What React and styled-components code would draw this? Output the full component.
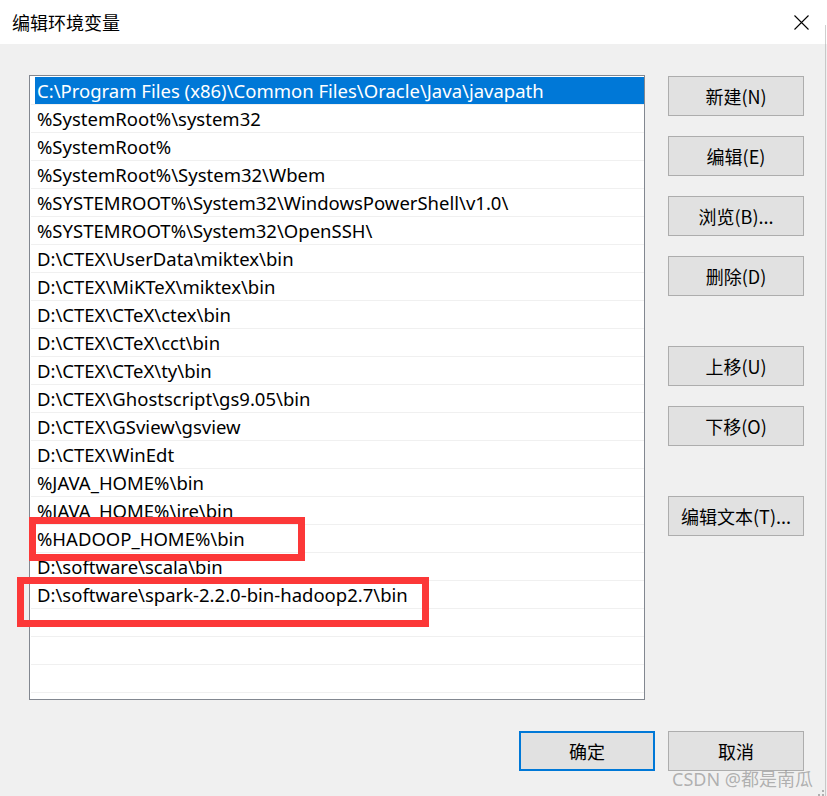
import React from "react";
import styled, { createGlobalStyle } from "styled-components";

const GlobalStyle = createGlobalStyle`
  html, body {
    margin: 0;
    padding: 0;
    background: #f0f0f0;
  }
  body {
    font-family: "Noto Sans", "Noto Sans CJK SC", sans-serif;
    color: #000;
  }
`;

const paths = [
  "C:\\Program Files (x86)\\Common Files\\Oracle\\Java\\javapath",
  "%SystemRoot%\\system32",
  "%SystemRoot%",
  "%SystemRoot%\\System32\\Wbem",
  "%SYSTEMROOT%\\System32\\WindowsPowerShell\\v1.0\\",
  "%SYSTEMROOT%\\System32\\OpenSSH\\",
  "D:\\CTEX\\UserData\\miktex\\bin",
  "D:\\CTEX\\MiKTeX\\miktex\\bin",
  "D:\\CTEX\\CTeX\\ctex\\bin",
  "D:\\CTEX\\CTeX\\cct\\bin",
  "D:\\CTEX\\CTeX\\ty\\bin",
  "D:\\CTEX\\Ghostscript\\gs9.05\\bin",
  "D:\\CTEX\\GSview\\gsview",
  "D:\\CTEX\\WinEdt",
  "%JAVA_HOME%\\bin",
  "%JAVA_HOME%\\jre\\bin",
  "%HADOOP_HOME%\\bin",
  "D:\\software\\scala\\bin",
  "D:\\software\\spark-2.2.0-bin-hadoop2.7\\bin",
  "",
  "",
  "",
  "",
];

const Dialog = styled.div`
  position: relative;
  width: 827px;
  height: 796px;
  background: #f0f0f0;
  overflow: hidden;
  display: flex;
  flex-direction: column;
`;

const TitleBar = styled.div`
  height: 44px;
  background: #fff;
  display: flex;
  align-items: center;
  justify-content: space-between;
  padding: 0 18px 0 12px;
  flex-shrink: 0;
`;

const Title = styled.span`
  font-family: "Noto Sans CJK SC", sans-serif;
  font-size: 18px;
  line-height: 44px;
`;

const CloseButton = styled.div`
  width: 15px;
  height: 15px;
  display: flex;
  svg {
    display: block;
  }
`;

const Body = styled.div`
  display: flex;
  padding: 31px 0 0 29px;
  gap: 23px;
`;

const ListBox = styled.div`
  width: 614px;
  height: 622px;
  border: 1px solid #828790;
  background: #fff;
  padding-top: 1px;
  box-sizing: content-box;
  overflow: hidden;
`;

const Row = styled.div`
  height: 27px;
  border-bottom: 1px solid #f0f0f0;
  margin-left: 1px;
`;

const RowLabel = styled.div`
  height: 27px;
  margin-left: 4px;
  padding-left: 2px;
  line-height: 28px;
  font-size: 18.5px;
  white-space: nowrap;
  background: ${(p) => (p.$selected ? "#0078d7" : "transparent")};
  color: ${(p) => (p.$selected ? "#fff" : "#000")};
`;

const ButtonColumn = styled.div`
  display: flex;
  flex-direction: column;
  padding-top: 1px;
`;

const Button = styled.button`
  width: 136px;
  height: 40px;
  margin-top: ${(p) => p.$gap || 0}px;
  box-sizing: border-box;
  border: ${(p) => (p.$default ? "2px solid #0078d7" : "1px solid #adadad")};
  background: #e1e1e1;
  font-family: "Noto Sans CJK SC", sans-serif;
  font-size: 18px;
  color: #000;
  padding: 0;
  display: flex;
  align-items: center;
  justify-content: center;
`;

const Footer = styled.div`
  display: flex;
  justify-content: flex-end;
  gap: 13px;
  padding: 31px 23px 0 0;
`;

const Highlight = styled.div`
  position: absolute;
  left: ${(p) => p.$x}px;
  top: ${(p) => p.$y}px;
  width: ${(p) => p.$w}px;
  height: ${(p) => p.$h}px;
  border: 7px solid #fc3838;
  box-sizing: border-box;
  pointer-events: none;
`;

const Watermark = styled.div`
  position: absolute;
  right: 14px;
  bottom: 5px;
  font-family: "Noto Sans", "Noto Sans CJK SC", sans-serif;
  font-size: 18px;
  color: rgba(120, 120, 120, 0.55);
  white-space: nowrap;
`;

const Grip = styled.div`
  position: absolute;
  right: 3px;
  bottom: 3px;
  width: 10px;
  height: 10px;
`;

const EdgeLine = styled.div`
  position: absolute;
  right: 1px;
  top: 25px;
  bottom: 0;
  width: 1px;
  background: #a0a0a0;
  opacity: 0.5;
`;

const sideButtons = [
  { label: "新建(N)", gap: 0 },
  { label: "编辑(E)", gap: 20 },
  { label: "浏览(B)...", gap: 20 },
  { label: "删除(D)", gap: 20 },
  { label: "上移(U)", gap: 50 },
  { label: "下移(O)", gap: 20 },
  { label: "编辑文本(T)...", gap: 50 },
];

export default function App() {
  return (
    <>
      <GlobalStyle />
      <Dialog>
        <TitleBar>
          <Title>编辑环境变量</Title>
          <CloseButton>
            <svg width="15" height="15" viewBox="0 0 15 15">
              <path d="M0.5 0.5 L14.5 14.5 M14.5 0.5 L0.5 14.5" stroke="#000" strokeWidth="1.1" />
            </svg>
          </CloseButton>
        </TitleBar>
        <Body>
          <ListBox>
            {paths.map((p, i) => (
              <Row key={i}>
                <RowLabel $selected={i === 0}>{p}</RowLabel>
              </Row>
            ))}
          </ListBox>
          <ButtonColumn>
            {sideButtons.map((b) => (
              <Button key={b.label} $gap={b.gap}>
                {b.label}
              </Button>
            ))}
          </ButtonColumn>
        </Body>
        <Footer>
          <Button $default>确定</Button>
          <Button>取消</Button>
        </Footer>
        <Highlight $x={29} $y={517} $w={276} $h={44} />
        <Highlight $x={17} $y={577} $w={412} $h={50} />
        <Watermark>CSDN @都是南瓜</Watermark>
        <Grip>
          <svg width="10" height="10" viewBox="0 0 10 10" fill="#b0b0b0">
            <rect x="8" y="0" width="2" height="2" />
            <rect x="4" y="4" width="2" height="2" />
            <rect x="8" y="4" width="2" height="2" />
            <rect x="0" y="8" width="2" height="2" />
            <rect x="4" y="8" width="2" height="2" />
            <rect x="8" y="8" width="2" height="2" />
          </svg>
        </Grip>
        <EdgeLine />
      </Dialog>
    </>
  );
}
